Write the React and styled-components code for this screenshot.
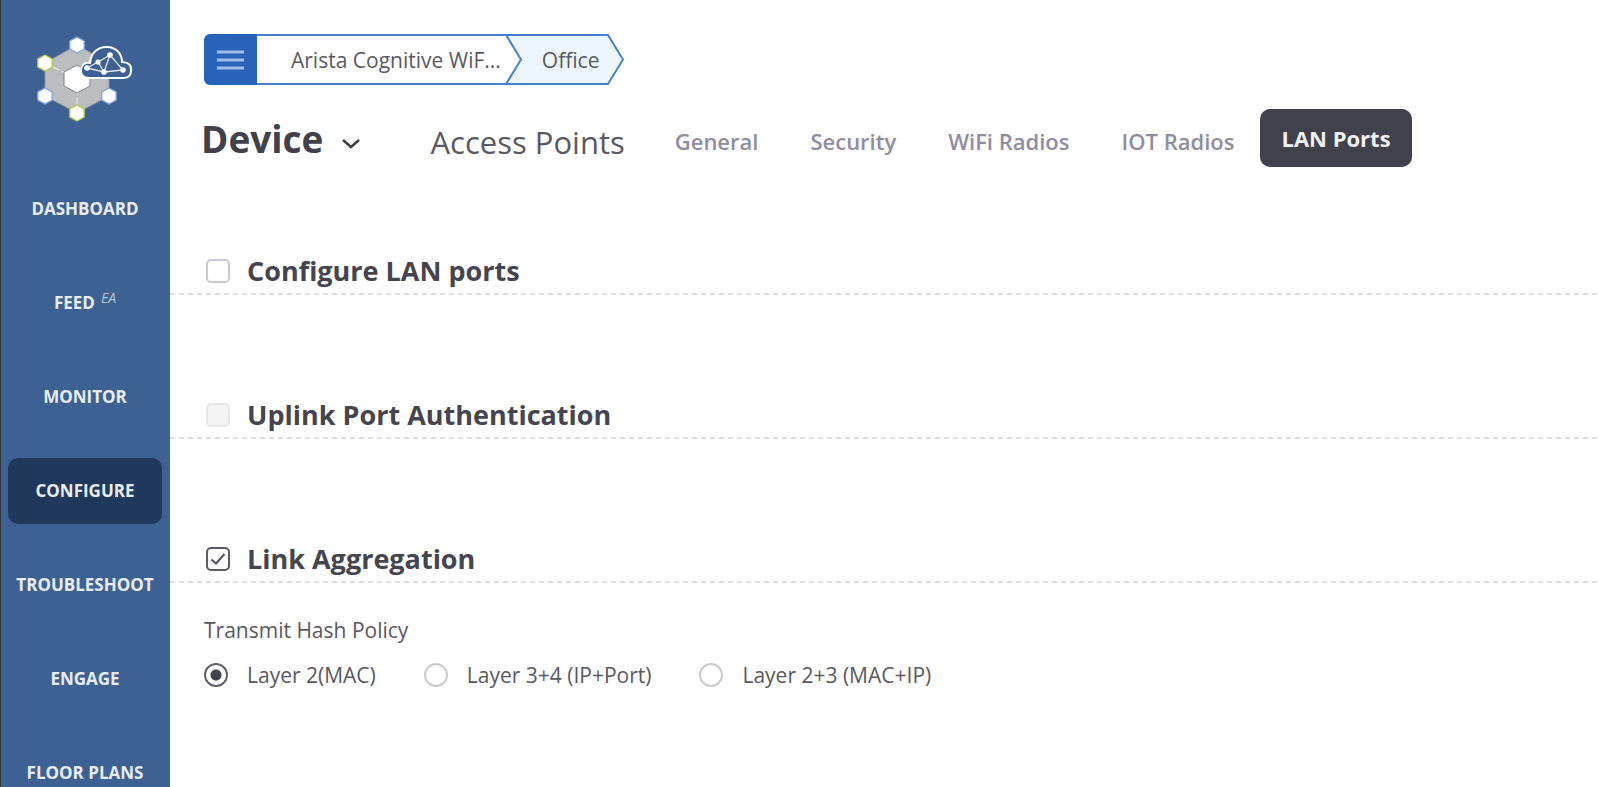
import React, { useState } from "react";
import styled, { createGlobalStyle } from "styled-components";

const GlobalStyle = createGlobalStyle`
  * {
    box-sizing: border-box;
  }
  body {
    margin: 0;
    background-color: #fff;
    color: #5a5962;
    font-family: "Open Sans", "Noto Sans", sans-serif;
    font-size: 21px;
    line-height: 30px;
  }
  button, input {
    font: inherit;
    color: inherit;
  }
`;

const Layout = styled.div`
  display: flex;
  height: 100vh;
  overflow: hidden;
`;

const Sidebar = styled.aside`
  flex: none;
  display: flex;
  flex-direction: column;
  width: 170px;
  padding: 36px 8px 0 7px;
  overflow: hidden;
  background-color: #3e6194;
  border-left: 1px solid #333538;
`;

const Logo = styled.svg`
  flex: none;
  display: block;
  width: 98px;
  height: 88px;
  margin: 0 auto 52px 28px;
`;

const NavList = styled.nav`
  display: flex;
  flex-direction: column;
  gap: 28px;
`;

const NavLink = styled.a`
  flex: none;
  display: flex;
  justify-content: center;
  align-items: center;
  height: 66px;
  border-radius: 10px;
  background-color: ${({ $active }) => ($active ? "#20385c" : "transparent")};
  color: #e9eef5;
  font-size: 17px;
  font-weight: 700;
  text-decoration: none;
  white-space: nowrap;

  sup {
    align-self: flex-start;
    margin: 13px 0 0 6px;
    color: #b4c3d9;
    font-size: 14px;
    font-style: italic;
    font-weight: 400;
  }
`;

const Main = styled.main`
  flex: 1;
  min-width: 0;
  padding-top: 34px;
`;

const Breadcrumb = styled.nav`
  display: flex;
  height: 51px;
  margin-left: 34px;
`;

const MenuButton = styled.button`
  display: flex;
  justify-content: center;
  align-items: center;
  width: 53px;
  padding: 0;
  border: none;
  border-radius: 6px 0 0 6px;
  background-color: #2862b9;
`;

const Crumb = styled.a`
  display: flex;
  align-items: center;
  padding: ${({ $current }) => ($current ? "0 8px 0 20px" : "0 4px 0 34px")};
  border: solid #4a7fca;
  border-width: 2px 0;
  background-color: ${({ $current }) => ($current ? "#edf6fe" : "#fff")};
  text-decoration: none;
  color: inherit;
  white-space: nowrap;
`;

const ArrowSvg = styled.svg`
  flex: none;
  display: block;
  width: 17px;
  height: 51px;
`;

const Header = styled.header`
  display: flex;
  align-items: flex-start;
  height: 60px;
  margin: 24px 0 0 31px;
  white-space: nowrap;
`;

const DeviceButton = styled.button`
  display: flex;
  align-items: baseline;
  gap: 18px;
  margin-right: 69px;
  padding: 0;
  border: none;
  background: none;
  color: #41414c;
  font-size: 37px;
  font-weight: 700;
  line-height: 60px;
`;

const PageTitle = styled.h1`
  margin: 0 24px 0 0;
  font-size: 31px;
  font-weight: 400;
  line-height: 66px;
`;

const TabList = styled.div`
  display: flex;
`;

const Tab = styled.button`
  height: 58px;
  padding: ${({ $active }) => ($active ? "0 21px" : "6px 26px 0")};
  border: none;
  border-radius: 10px;
  background-color: ${({ $active }) => ($active ? "#41414b" : "transparent")};
  color: ${({ $active }) => ($active ? "#f3f3f5" : "#8f8d9f")};
  font-size: 22px;
  font-weight: ${({ $active }) => ($active ? 700 : 600)};
`;

const Sections = styled.div`
  padding-top: 74px;
`;

const Section = styled.section`
  min-height: 144px;
`;

const SectionHead = styled.div`
  height: 52px;
  padding: 4px 0 0 36px;
  background: repeating-linear-gradient(90deg, #dedee0 0 5px, transparent 5px 9px) bottom / 100% 2px no-repeat;

  label {
    display: inline-flex;
    align-items: center;
    gap: 17px;
    height: 48px;
    color: #45454f;
    font-size: 27px;
    font-weight: 700;
  }
`;

const Checkbox = styled.input`
  appearance: none;
  width: 24px;
  height: 24px;
  margin: 0;
  border: 2px solid #c9c9cf;
  border-radius: 5px;
  background-color: #fff;

  &:checked {
    border-color: #5a5a64;
    background-image: url("data:image/svg+xml,%3Csvg xmlns='http://www.w3.org/2000/svg' viewBox='0 0 20 20' fill='none' stroke='%2355555f' stroke-width='2'%3E%3Cpath d='M3.5 10.5 8 14.5 16.5 5'/%3E%3C/svg%3E");
  }
  &:disabled {
    border-color: #e8e8e8;
    background-color: #f4f4f4;
  }
`;

const Policy = styled.fieldset`
  margin: 0;
  padding: 32px 34px;
  border: none;

  legend {
    float: left;
    width: 100%;
    padding: 0;
    margin-bottom: 15px;
  }
`;

const RadioRow = styled.div`
  clear: both;
  display: flex;
  flex-wrap: wrap;
  gap: 48px;

  label {
    display: flex;
    align-items: center;
    gap: 19px;
  }
`;

const Radio = styled.input`
  appearance: none;
  width: 24px;
  height: 24px;
  margin: 0;
  border: 2px solid #cbcbd0;
  border-radius: 50%;

  &:checked {
    border-color: #62626b;
    background: radial-gradient(circle, #41414b 5px, transparent 6px);
  }
`;

const NAV_ITEMS = ["Dashboard", "Feed", "Monitor", "Configure", "Troubleshoot", "Engage", "Floor Plans"];
const TABS = ["General", "Security", "WiFi Radios", "IOT Radios", "LAN Ports"];
const POLICIES = ["Layer 2(MAC)", "Layer 3+4 (IP+Port)", "Layer 2+3 (MAC+IP)"];

const NODES = [
  { x: 41, y: 9, stroke: "#7fa3dc" },
  { x: 9, y: 27, stroke: "#b2cc4a" },
  { x: 9, y: 60, stroke: "#7fa3dc" },
  { x: 73, y: 60, stroke: "#7fa3dc" },
  { x: 41, y: 77, stroke: "#b2cc4a" },
];

function BrandLogo() {
  return (
    <Logo viewBox="0 0 98 88" aria-hidden="true">
      <path d="M41 9 73 27V60L41 77 9 60V27Z" fill="#bcbdbf" stroke="#8d929b" />
      <path d="M9 27 41 43V77" fill="none" stroke="#dcdddf" strokeWidth="1.5" strokeDasharray="7 2" />
      <path d="M41 29 54 36V50L41 57 28 50V36Z" fill="#fff" stroke="#7f8083" />
      {NODES.map(({ x, y, stroke }) => (
        <path
          key={`${x}-${y}`}
          d={`M${x} ${y - 8}l7.2 4v8l-7.2 4l-7.2-4v-8z`}
          fill="#fff"
          stroke={stroke}
          strokeWidth="1.3"
        />
      ))}
      <path
        d="M53 42C47 42 44 38 45 33C46 28 50 26 54 27C55 16 63 10 72 11C81 12 86 18 86 26C92 26 96 29 95 35C95 40 91 42 87 42Z"
        fill="#3e6194"
        stroke="#fff"
        strokeWidth="2"
      />
      <path d="M51 32 62 26 74 19 87 34 68 36ZM62 26 68 36 74 19" fill="none" stroke="#e4eaf3" strokeWidth="1.3" />
      <g fill="#fff">
        <circle cx="51" cy="32" r="2.8" />
        <circle cx="62" cy="26" r="2.6" />
        <circle cx="74" cy="19" r="2.8" />
        <circle cx="87" cy="34" r="2.8" />
        <circle cx="68" cy="36" r="2.8" />
      </g>
    </Logo>
  );
}

// Pointed end of a crumb, filled on both sides of the point
function Arrow({ fill, next }) {
  return (
    <ArrowSvg viewBox="0 0 17 51" aria-hidden="true">
      {next && <path d="M0 0H17V51H0Z" fill={next} />}
      <path d="M0 1H1L16 25.5 1 50H0" fill={fill} stroke="#4a7fca" strokeWidth="2" />
      {next && <path d="M0 1H17M0 50H17" stroke="#4a7fca" strokeWidth="2" />}
    </ArrowSvg>
  );
}

function ConfigSection({ title, children, ...inputProps }) {
  return (
    <Section>
      <SectionHead>
        <label>
          <Checkbox type="checkbox" {...inputProps} />
          {title}
        </label>
      </SectionHead>
      {children}
    </Section>
  );
}

export default function App() {
  const [tab, setTab] = useState("LAN Ports");
  const [policy, setPolicy] = useState(POLICIES[0]);

  return (
    <Layout>
      <GlobalStyle />
      <Sidebar>
        <BrandLogo />
        <NavList>
          {NAV_ITEMS.map((item) => (
            <NavLink key={item} href="#" $active={item === "Configure"}>
              {item.toUpperCase()}
              {item === "Feed" && <sup>EA</sup>}
            </NavLink>
          ))}
        </NavList>
      </Sidebar>
      <Main>
        <Breadcrumb>
          <MenuButton aria-label="Menu">
            <svg width="28" height="22" viewBox="0 0 28 22" stroke="#a3bce2" strokeWidth="3">
              <path d="M0 3H27M0 11H27M0 19H27" />
            </svg>
          </MenuButton>
          <Crumb href="#">Arista Cognitive WiF...</Crumb>
          <Arrow fill="#fff" next="#edf6fe" />
          <Crumb href="#" $current>Office</Crumb>
          <Arrow fill="#edf6fe" />
        </Breadcrumb>
        <Header>
          <DeviceButton>
            Device
            <svg width="20" height="16" viewBox="0 0 20 16" fill="none" stroke="#41414c" strokeWidth="2.6">
              <path d="M2 3 10 10 18 3" />
            </svg>
          </DeviceButton>
          <PageTitle>Access Points</PageTitle>
          <TabList>
            {TABS.map((name) => (
              <Tab key={name} $active={name === tab} onClick={() => setTab(name)}>{name}</Tab>
            ))}
          </TabList>
        </Header>
        <Sections>
          <ConfigSection title="Configure LAN ports" />
          <ConfigSection title="Uplink Port Authentication" disabled />
          <ConfigSection title="Link Aggregation" defaultChecked>
            <Policy>
              <legend>Transmit Hash Policy</legend>
              <RadioRow>
                {POLICIES.map((name) => (
                  <label key={name}>
                    <Radio
                      type="radio"
                      name="policy"
                      checked={name === policy}
                      onChange={() => setPolicy(name)}
                    />
                    {name}
                  </label>
                ))}
              </RadioRow>
            </Policy>
          </ConfigSection>
        </Sections>
      </Main>
    </Layout>
  );
}
